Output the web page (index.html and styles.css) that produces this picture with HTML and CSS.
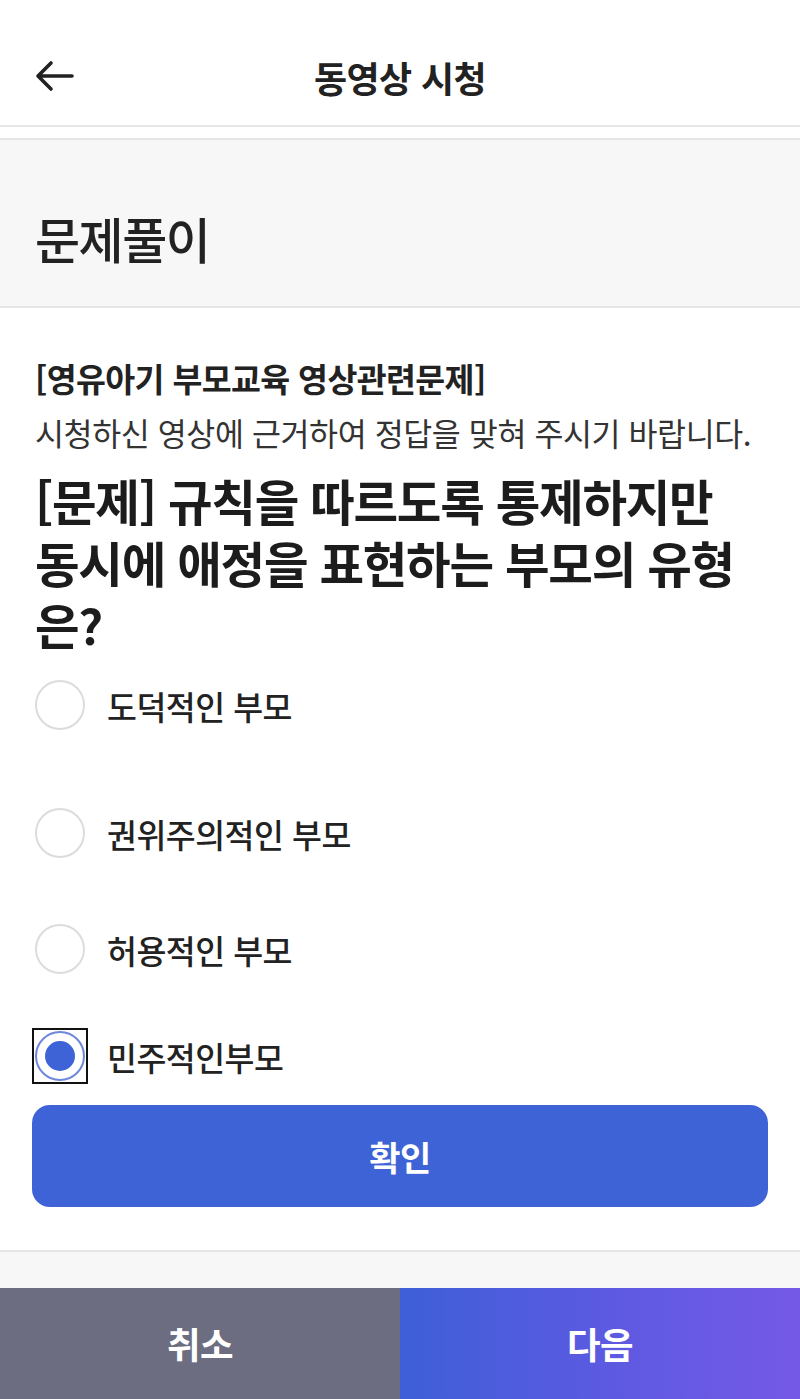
FILE: index.html
```html
<!DOCTYPE html>
<html lang="ko">
<head>
<meta charset="utf-8">
<title>동영상 시청</title>
<link rel="stylesheet" href="styles.css">
</head>
<body>
<header class="header">
  <span class="back">
    <svg width="40" height="32" viewBox="0 0 40 32"><path d="M38 16H4M17 3L4 16l13 13" fill="none" stroke="#222" stroke-width="3.6" stroke-linecap="round" stroke-linejoin="round"/></svg>
  </span>
  <h1 class="title">동영상 시청</h1>
</header>
<div class="spacer"></div>
<section class="section-head">
  <h2>문제풀이</h2>
</section>
<main class="content">
  <p class="category">[영유아기 부모교육 영상관련문제]</p>
  <p class="guide">시청하신 영상에 근거하여 정답을 맞혀 주시기 바랍니다.</p>
  <p class="question">[문제] 규칙을 따르도록 통제하지만<br>동시에 애정을 표현하는 부모의 유형<br>은?</p>
  <ul class="options">
    <li class="option"><span class="radio-box"><span class="radio"></span></span><span class="label">도덕적인 부모</span></li>
    <li class="option"><span class="radio-box"><span class="radio"></span></span><span class="label">권위주의적인 부모</span></li>
    <li class="option"><span class="radio-box"><span class="radio"></span></span><span class="label">허용적인 부모</span></li>
    <li class="option"><span class="radio-box focused"><span class="radio checked"></span></span><span class="label">민주적인부모</span></li>
  </ul>
  <button class="confirm">확인</button>
</main>
<div class="gap"></div>
<footer class="bottom">
  <button class="btn cancel">취소</button>
  <button class="btn next">다음</button>
</footer>
</body>
</html>
```

FILE: styles.css
```css
* { box-sizing: border-box; }
html, body { margin: 0; padding: 0; background: #fff; }
body {
  font-family: "Noto Sans CJK KR", "Noto Sans", sans-serif;
  color: #222;
  width: 800px;
}
.header {
  position: relative;
  height: 127px;
  padding-top: 28px;
  display: flex;
  align-items: center;
  justify-content: center;
  border-bottom: 2px solid #e6e6e6;
}
.back {
  position: absolute;
  left: 34px;
  top: 60px;
  display: flex;
}
.title {
  margin: 0;
  font-size: 36px;
  font-weight: 700;
  letter-spacing: -0.6px;
  line-height: 40px;
  color: #222;
}
.spacer { height: 11px; }
.section-head {
  height: 170px;
  background: #f7f7f7;
  border-top: 2px solid #e6e6e6;
  border-bottom: 2px solid #e6e6e6;
  padding: 68px 35px 0;
}
.section-head h2 {
  margin: 0;
  font-size: 49px;
  font-weight: 500;
  line-height: 60px;
  letter-spacing: -1.5px;
  color: #222;
}
.content { padding: 50px 32px 0 35px; }
.category {
  margin: 0;
  font-size: 32.5px;
  font-weight: 700;
  line-height: 40px;
  letter-spacing: -0.6px;
}
.guide {
  margin: 14px 0 0;
  font-size: 31.5px;
  font-weight: 400;
  line-height: 40px;
  letter-spacing: -0.4px;
  color: #333;
  white-space: nowrap;
}
.question {
  margin: 17px 0 0;
  font-size: 48.5px;
  font-weight: 700;
  line-height: 62px;
  letter-spacing: -1.3px;
  color: #1c1c1c;
  white-space: nowrap;
}
.options { list-style: none; margin: 22px 0 0; padding: 0; }
.option {
  display: flex;
  align-items: center;
  height: 56px;
  margin-left: -3px;
}
.option:nth-child(2) { margin-top: 72px; }
.option:nth-child(3) { margin-top: 60px; }
.option:nth-child(4) { margin-top: 51px; }
.radio-box {
  width: 56px;
  height: 56px;
  display: flex;
  align-items: center;
  justify-content: center;
  border: 2px solid transparent;
}
.radio-box.focused { border-color: #111; }
.radio {
  width: 50px;
  height: 50px;
  border-radius: 50%;
  border: 2px solid #dcdcdc;
  background: #fff;
  display: flex;
  align-items: center;
  justify-content: center;
}
.radio.checked { border-color: #6d86de; }
.radio.checked::after {
  content: "";
  width: 30px;
  height: 30px;
  border-radius: 50%;
  background: #3d63d6;
}
.label {
  margin-left: 19px;
  font-size: 32.5px;
  font-weight: 500;
  letter-spacing: -0.5px;
  color: #222;
}
.confirm {
  display: block;
  width: 736px;
  height: 102px;
  margin: 21px 0 0 -3px;
  border: none;
  border-radius: 18px;
  background: #3e63d6;
  color: #fff;
  font-family: inherit;
  font-size: 34px;
  font-weight: 700;
  letter-spacing: -0.5px;
}
.gap {
  margin-top: 43px;
  height: 38px;
  background: #f7f7f7;
  border-top: 2px solid #e6e6e6;
}
.bottom {
  display: flex;
  height: 111px;
}
.btn {
  flex: 1;
  border: none;
  color: #fff;
  font-family: inherit;
  font-size: 36.5px;
  font-weight: 700;
  letter-spacing: -0.5px;
}
.cancel { background: #6c6d80; }
.next { background: linear-gradient(90deg, #3e5fd8 0%, #5b5ae0 50%, #7559e7 100%); }
```
